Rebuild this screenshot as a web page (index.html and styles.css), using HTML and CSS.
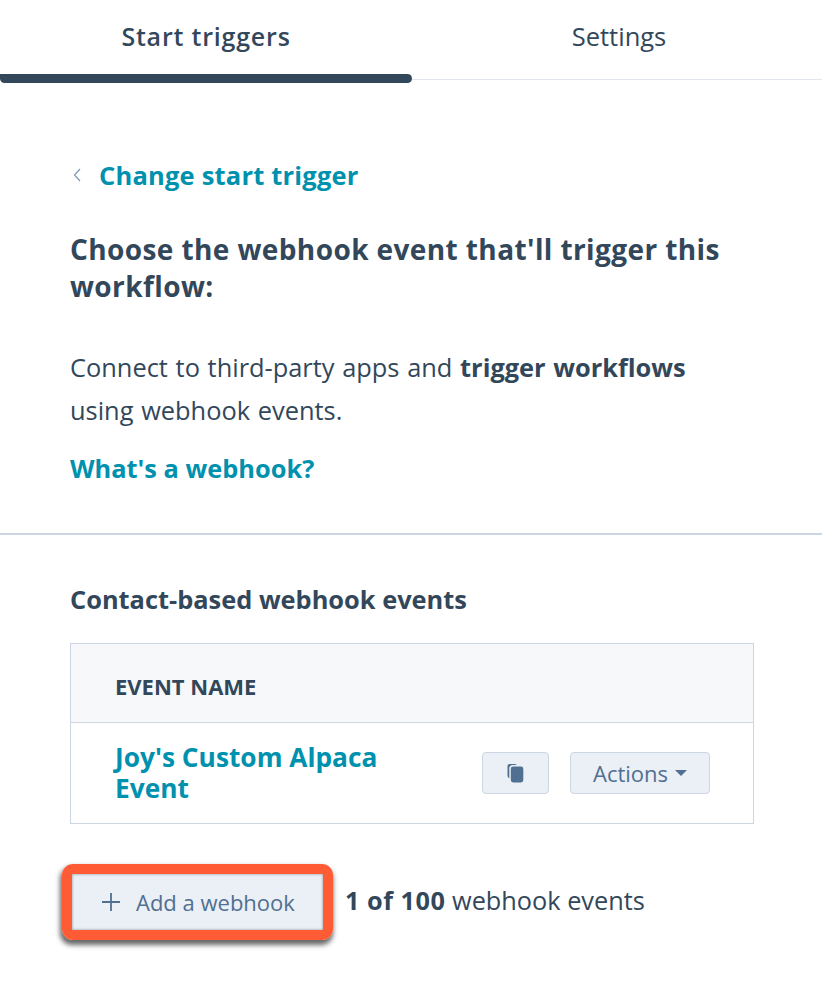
FILE: index.html
```html
<!DOCTYPE html>
<html lang="en">
<head>
<meta charset="UTF-8" />
<title>Start triggers</title>
<link rel="stylesheet" href="styles.css">
</head>
<body>

<nav class="tabs">
  <a class="tab active">Start triggers<span class="tab-bar"></span></a>
  <a class="tab">Settings</a>
</nav>

<section class="intro">
  <a class="back">
    <svg class="back-icon" width="8" height="14" viewBox="0 0 8 14"><path d="M7 1 1.5 7 7 13" fill="none" stroke="#7c98b6" stroke-width="1.2"/></svg>
    <span>Change start trigger</span>
  </a>
  <h2>Choose the webhook event that'll trigger this workflow:</h2>
  <p class="lead">Connect to third-party apps and <b>trigger workflows</b> using webhook events.</p>
  <a class="link">What's a webhook?</a>
</section>

<section class="events">
  <h3>Contact-based webhook events</h3>
  <div class="table">
    <div class="table-head">EVENT NAME</div>
    <div class="table-row">
      <a class="event-name">Joy's Custom Alpaca Event</a>
      <div class="row-actions">
        <button class="btn btn-copy">
          <svg width="20" height="20" viewBox="0 0 20 20"><path d="M3.500 1h5.200c1 0 1.700.4 2.100 1H6.600C4.600 2 3.300 3.300 3.300 5.300v10C2 14.600 1.500 13.700 1.500 12.600V3.500C1.500 2.100 2.200 1 3.500 1Z" fill="#516f90"/><rect x="4.800" y="3.500" width="12.500" height="16" rx="2.400" fill="#516f90"/></svg>
        </button>
        <button class="btn btn-actions">Actions<span class="caret"></span></button>
      </div>
    </div>
  </div>
  <div class="footer-row">
    <div class="highlight">
      <button class="btn-add">
        <svg width="18" height="18" viewBox="0 0 18 18"><path d="M9 0v18M0 9h18" stroke="#516f90" stroke-width="1.8" fill="none"/></svg>
        Add a webhook
      </button>
    </div>
    <p class="count"><b>1 of 100</b> webhook events</p>
  </div>
</section>

</body>
</html>
```

FILE: styles.css
```css
body {
  margin: 0;
  font-family: "Open Sans", Lato, sans-serif;
  color: #33475b;
  background: #fff;
}

b {
  font-weight: 700;
}

/* tabs */
.tabs {
  display: flex;
  align-items: flex-start;
  height: 83px;
}

.tab {
  display: flex;
  flex-direction: column;
  align-items: center;
  justify-content: space-between;
  width: 410px;
  height: 80px;
  box-sizing: border-box;
  padding: 19px 0 0 4px;
  font-size: 25.500px;
  line-height: 34px;
  border-bottom: 1px solid #e1e5ee;
}

.tab.active {
  width: 412px;
  height: 83px;
  padding-left: 0;
  font-size: 25px;
  font-weight: 600;
  letter-spacing: 0.8px;
  border-bottom: 0;
}

.tab-bar {
  align-self: stretch;
  height: 9px;
  background: #33475b;
  border-radius: 0 5px 5px 5px;
}

/* intro block */
.intro {
  padding: 75px 70px 48px;
  border-bottom: 2px solid #cbd6e2;
}

.back {
  display: flex;
  align-items: center;
  gap: 18px;
  color: #0091ae;
  font-size: 25.500px;
  font-weight: 700;
  letter-spacing: 0.2px;
  line-height: 34px;
}

.back-icon {
  margin-left: 3px;
}

h2 {
  margin: 39px 0 0;
  font-size: 28px;
  line-height: 37px;
  font-weight: 700;
  letter-spacing: 0.4px;
}

.lead {
  margin: 41px 0 0;
  font-size: 25.400px;
  word-spacing: 1.100px;
  line-height: 43px;
  width: 640px;
}

.link {
  display: block;
  margin-top: 19px;
  color: #0091ae;
  font-size: 25.400px;
  font-weight: 700;
  line-height: 34px;
}

/* events */
.events {
  padding: 47px 68px 54px 70px;
}

h3 {
  margin: 0 0 27px;
  font-size: 25.400px;
  line-height: 34px;
  font-weight: 700;
}

.table {
  border: 1px solid #cbd6e2;
}

.table-head {
  background: #f6f8fa;
  height: 78px;
  padding-left: 44px;
  font-size: 22px;
  font-weight: 700;
  border-bottom: 1px solid #cbd6e2;
  line-height: 84px;
}

.table-row {
  display: flex;
  align-items: center;
  height: 100px;
  padding: 0 43px 0 44px;
}

.event-name {
  width: 300px;
  margin-right: auto;
  color: #0091ae;
  font-size: 26.300px;
  font-weight: 700;
  line-height: 31px;
}

.row-actions {
  display: flex;
  gap: 21px;
}

.btn {
  height: 42px;
  background: #eaf0f6;
  border: 1px solid #cbd6e2;
  border-radius: 4px;
  color: #516f90;
  font-family: inherit;
  font-size: 22px;
  display: flex;
  align-items: center;
  justify-content: center;
  padding: 0;
}

.btn-copy {
  width: 67px;
}

.btn-actions {
  width: 140px;
}

.caret {
  width: 0;
  height: 0;
  margin-left: 7px;
  border: 6px solid transparent;
  border-top: 6px solid #516f90;
  border-bottom: 0;
}

.footer-row {
  display: flex;
  align-items: center;
  margin-top: 40px;
  margin-left: -8px;
  gap: 12px;
}

.highlight {
  border: 10px solid #ff5c35;
  border-radius: 11px;
  box-shadow: -1px 4px 5px 1px rgba(40, 40, 40, 0.7);
}

.btn-add {
  display: flex;
  align-items: center;
  gap: 16px;
  width: 251px;
  height: 56px;
  box-sizing: border-box;
  padding: 0 0 0 30px;
  background: #eaf0f6;
  border: 0;
  color: #516f90;
  font-family: inherit;
  font-size: 22px;
  box-shadow: inset 0 0 3px rgba(0, 0, 0, 0.4);
}

.count {
  margin: 0 0 5px;
  font-size: 25.300px;
}

.count b {
  letter-spacing: 0.5px;
}
```
